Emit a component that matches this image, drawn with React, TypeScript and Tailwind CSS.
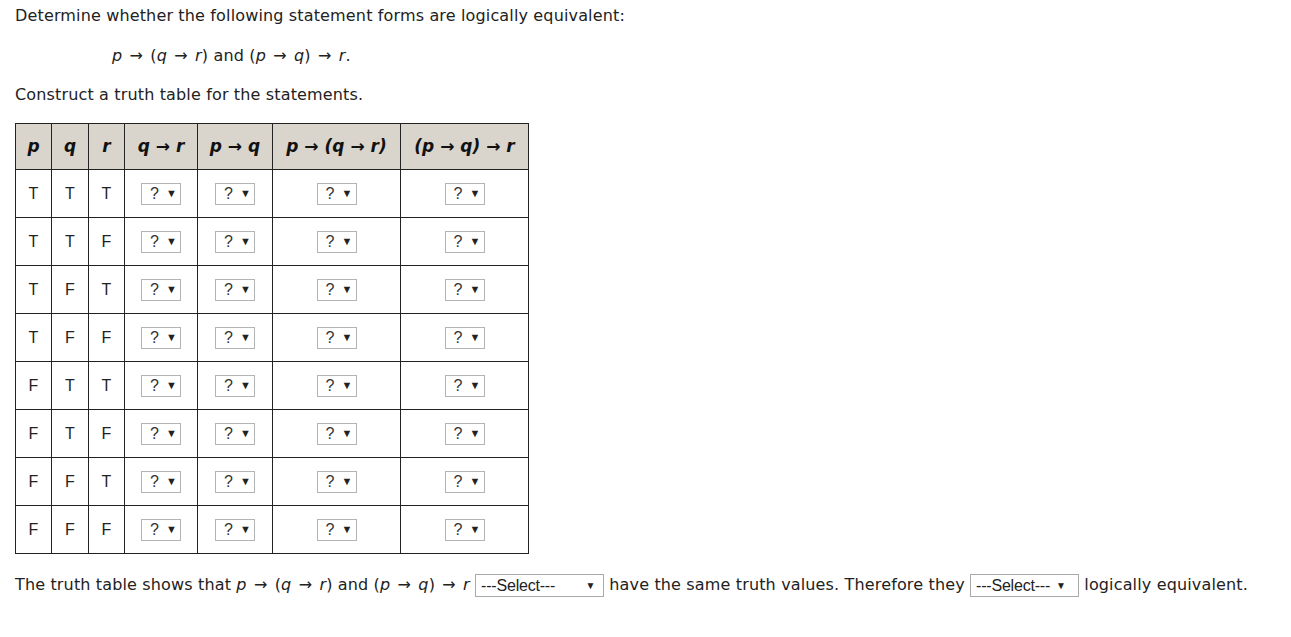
const rows = [
  ['T', 'T', 'T'],
  ['T', 'T', 'F'],
  ['T', 'F', 'T'],
  ['T', 'F', 'F'],
  ['F', 'T', 'T'],
  ['F', 'T', 'F'],
  ['F', 'F', 'T'],
  ['F', 'F', 'F'],
]

const arrow = <span className="not-italic mx-[2px]"> → </span>

function Pick() {
  return (
    <span className="inline-flex items-center h-[22px] w-[40px] pl-[8px] gap-[7px] border border-[#b4b4b4] bg-white font-['Liberation_Sans',sans-serif] text-[16px] text-[#333]">
      <span>?</span>
      <span className="text-[11px] text-[#222]">▼</span>
    </span>
  )
}

function Select({ w, gap }: { w: string; gap: string }) {
  return (
    <span className={`inline-flex items-center h-[23px] ${w} pl-[5px] border border-[#a9a9a9] bg-white font-['Liberation_Sans',sans-serif] text-[16px] tracking-[-0.2px] text-[#222] align-middle`}>
      <span>---Select---</span>
      <span className={`text-[10px] ${gap}`}>▼</span>
    </span>
  )
}

export default function App() {
  const th = 'border border-[#222] bg-[#d9d5cc] font-bold italic text-[17px] text-[#111] px-0'
  const td = 'border border-[#222] text-center h-[48px] p-0'
  return (
    <div className="min-h-screen bg-white font-['DejaVu_Sans',Verdana,sans-serif] text-[16px] tracking-[0.15px] text-[#222] pl-[15px] pt-[5px]">
      <p className="leading-[22px]">Determine whether the following statement forms are logically equivalent:</p>
      <p className="leading-[22px] mt-[18px] pl-[97px]">
        <i>p</i>{arrow}(<i>q</i>{arrow}<i>r</i>) and (<i>p</i>{arrow}<i>q</i>){arrow}<i>r</i>.
      </p>
      <p className="leading-[22px] mt-[17px]">Construct a truth table for the statements.</p>

      <table className="border-collapse mt-[17px] tracking-normal">
        <thead>
          <tr className="h-[46px]">
            <th className={`${th} w-[36px]`}>p</th>
            <th className={`${th} w-[37px]`}>q</th>
            <th className={`${th} w-[36px]`}>r</th>
            <th className={`${th} w-[73px]`}>q → r</th>
            <th className={`${th} w-[75px]`}>p → q</th>
            <th className={`${th} w-[128px]`}>p → (q → r)</th>
            <th className={`${th} w-[128px]`}>(p → q) → r</th>
          </tr>
        </thead>
        <tbody>
          {rows.map((r, i) => (
            <tr key={i}>
              {r.map((v, j) => (
                <td key={j} className={`${td} font-['Liberation_Sans',sans-serif] text-[16px] text-[#222]`}>{v}</td>
              ))}
              {[0, 1, 2, 3].map((k) => (
                <td key={k} className={td}><div className="flex justify-center"><Pick /></div></td>
              ))}
            </tr>
          ))}
        </tbody>
      </table>

      <p className="mt-[19px] leading-[24px] whitespace-nowrap">
        The truth table shows that <i>p</i>{arrow}(<i>q</i>{arrow}<i>r</i>) and (<i>p</i>{arrow}<i>q</i>){arrow}<i>r</i>{' '}
        <Select w="w-[129px]" gap="ml-auto mr-[8px]" /> have the same truth values. Therefore they{' '}
        <Select w="w-[109px]" gap="ml-[6px]" /> logically equivalent.
      </p>
    </div>
  )
}
